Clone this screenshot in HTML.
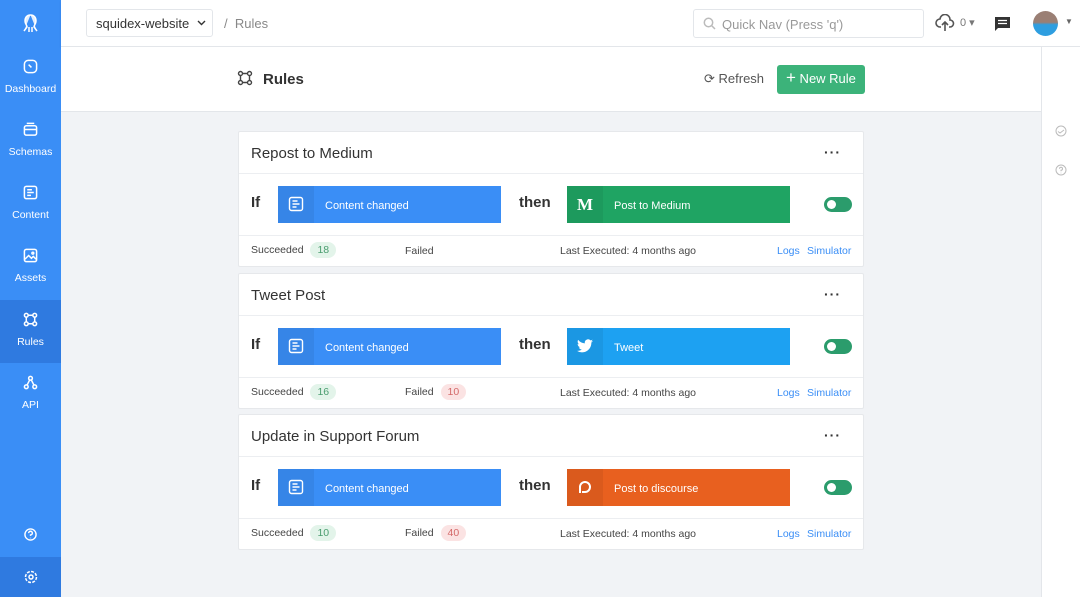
<!DOCTYPE html>
<html><head><meta charset="utf-8"><style>
*{box-sizing:border-box;margin:0;padding:0}
body{width:1080px;height:597px;overflow:hidden;font-family:"Liberation Sans",sans-serif;background:#f1f3f6;position:relative;color:#333}
.side{position:absolute;left:0;top:0;width:61px;height:597px;background:#3a8ef6}
.nav{position:absolute;left:0;width:61px;height:63px;color:#fff;font-size:10.5px;text-align:center}
.nav svg{display:block;margin:12px auto 9px}
.act{background:#2f7ae0}
.top{position:absolute;left:61px;top:0;right:0;height:47px;background:#fff;border-bottom:1px solid #e3e6ea;box-shadow:0 1px 3px rgba(0,0,0,.06)}
.hdr{position:absolute;left:61px;top:47px;width:980px;height:65px;background:#fff;border-bottom:1px solid #e3e6ea}
.rp{position:absolute;left:1041px;top:47px;width:39px;height:550px;background:#fff;border-left:1px solid #e3e6ea}
.card{position:absolute;left:238px;width:626px;height:136px;background:#fff;border:1px solid #e6e8eb;border-radius:2px}
.ch{height:42px;border-bottom:1px solid #eceef1;padding:13px 12px;font-size:15px;color:#333}
.dots{position:absolute;right:22px;top:12px;font-size:14px;font-weight:bold;letter-spacing:1px}
.cb{height:62px;border-bottom:1px solid #eceef1;position:relative}
.if{position:absolute;left:12px;top:20px;font-size:15px;font-weight:bold}
.then{position:absolute;left:280px;top:20px;font-size:15px;font-weight:bold}
.blk{position:absolute;top:12px;width:223px;height:37px;color:#fff;font-size:11px}
.blk .ic{position:absolute;left:0;top:0;width:36px;height:37px;background:rgba(0,0,0,.06)}
.blk span{position:absolute;left:47px;top:14px}
.tg{position:absolute;left:585px;top:23px;width:28px;height:15px;border-radius:8px;background:#2b9c6c}
.tg:after{content:"";position:absolute;left:3px;top:3px;width:9px;height:9px;border-radius:50%;background:#fff}
.cf{position:relative;height:31px;font-size:10.5px;color:#444}
.cf div{position:absolute;top:9px}
.bd{display:inline-block;padding:2px 7px;border-radius:9px;margin-left:4px}
.g{background:#e3f4ea;color:#4a9d6f}.r{background:#fbe3e3;color:#d46a6a}
.lk{color:#3a8ef6}
</style></head><body>
<div class="side">
 <svg style="position:absolute;left:22px;top:14px" width="17" height="20" viewBox="0 0 17 20"><path d="M8.5 1C4.5 1 3 4 3 7c0 3 2 4 2 6l-3 4M8.5 1c4 0 5.5 3 5.5 6 0 3-2 4-2 6l3 4M7 13v5M10 13v5" fill="#fff" fill-opacity=".85" stroke="#fff" stroke-width="1.5"/></svg>
 <div class="nav" style="top:47px"><svg width="15" height="15" viewBox="0 0 16 16" fill="none" stroke="#fff" stroke-width="1.6"><rect x="1.5" y="1.5" width="13" height="13" rx="4"/><path d="M6 6l3 3"/></svg>Dashboard</div>
 <div class="nav" style="top:110px"><svg width="15" height="15" viewBox="0 0 16 16" fill="none" stroke="#fff" stroke-width="1.6"><rect x="1.5" y="4" width="13" height="10" rx="2"/><path d="M4 1.5h8M1.5 8h13"/></svg>Schemas</div>
 <div class="nav" style="top:173px"><svg width="15" height="15" viewBox="0 0 16 16" fill="none" stroke="#fff" stroke-width="1.6"><rect x="1.5" y="1.5" width="13" height="13" rx="2"/><path d="M4.5 5h5M4.5 8h7M4.5 11h4"/></svg>Content</div>
 <div class="nav" style="top:236px"><svg width="15" height="15" viewBox="0 0 16 16" fill="none" stroke="#fff" stroke-width="1.6"><rect x="1.5" y="1.5" width="13" height="13" rx="2"/><path d="M2 12l4-4 3 3 2-2 3 3"/><circle cx="10.5" cy="5.5" r="1"/></svg>Assets</div>
 <div class="nav act" style="top:300px"><svg width="15" height="15" viewBox="0 0 16 16" fill="none" stroke="#fff" stroke-width="1.6"><circle cx="3.5" cy="3.5" r="2"/><circle cx="12.5" cy="3.5" r="2"/><circle cx="3.5" cy="12.5" r="2"/><circle cx="12.5" cy="12.5" r="2"/><path d="M5.5 3.5h5M5.5 12.5h5M3.5 5.5v5M12.5 5.5v5"/></svg>Rules</div>
 <div class="nav" style="top:363px"><svg width="15" height="15" viewBox="0 0 16 16" fill="none" stroke="#fff" stroke-width="1.6"><circle cx="8" cy="3.5" r="2"/><circle cx="3.5" cy="12.5" r="2"/><circle cx="12.5" cy="12.5" r="2"/><path d="M7 5.5l-2.5 5M9 5.5l2.5 5"/></svg>API</div>
 <svg style="position:absolute;left:24px;top:528px" width="13" height="13" viewBox="0 0 14 14" fill="none" stroke="#fff" stroke-width="1.5"><circle cx="7" cy="7" r="6"/><path d="M5 5.5a2 2 0 1 1 2 2v1M7 10.5v.5"/></svg>
 <div style="position:absolute;top:557px;left:0;width:61px;height:40px;background:#2f7ae0"><svg style="position:absolute;left:24px;top:13px" width="14" height="14" viewBox="0 0 14 14" fill="none" stroke="#fff" stroke-width="1.5"><circle cx="7" cy="7" r="2"/><circle cx="7" cy="7" r="5.5" stroke-dasharray="3 1.3"/></svg></div>
</div>
<div class="top">
 <div style="position:absolute;left:25px;top:9px;width:127px;height:28px;border:1px solid #e3e6ea;border-radius:3px;font-size:13px;padding:6px 9px;color:#333;white-space:nowrap">squidex-website <svg style="margin-left:4px;vertical-align:2px" width="9" height="6" viewBox="0 0 9 6" fill="none" stroke="#333" stroke-width="1.4"><path d="M1 1l3.5 3.5L8 1"/></svg></div>
 <div style="position:absolute;left:163px;top:16px;font-size:13px;color:#888">/&nbsp; Rules</div>
 <div style="position:absolute;left:632px;top:9px;width:231px;height:29px;border:1px solid #e3e6ea;border-radius:3px;font-size:13px;color:#999;padding:7px 28px"><svg style="position:absolute;left:9px;top:7px" width="13" height="13" viewBox="0 0 13 13" fill="none" stroke="#bbb" stroke-width="1.5"><circle cx="5.5" cy="5.5" r="4.2"/><path d="M8.5 8.5l3.5 3.5"/></svg>Quick Nav (Press 'q')</div>
 <svg style="position:absolute;left:874px;top:14px" width="20" height="18" viewBox="0 0 20 18" fill="none" stroke="#555" stroke-width="1.6"><path d="M6 13H5a4 4 0 0 1 0-8 5 5 0 0 1 10 1 3.5 3.5 0 0 1 0 7h-1M10 17V8M7 11l3-3 3 3"/></svg>
 <div style="position:absolute;left:899px;top:16px;font-size:11px;color:#777">0 &#9662;</div>
 <svg style="position:absolute;left:933px;top:16px" width="17" height="16" viewBox="0 0 17 16"><path d="M1 1h15v11H4l-3 3z" fill="#333"/><path d="M4 4.5h9M4 7.5h9" stroke="#fff" stroke-width="1.3"/></svg>
 <div style="position:absolute;left:972px;top:11px;width:25px;height:25px;border-radius:50%;background:linear-gradient(#9a7f74 45%,#2e9ee0 55%)"></div>
 <div style="position:absolute;left:1004px;top:17px;font-size:8px;color:#666">&#9660;</div>
</div>
<div class="hdr">
 <svg style="position:absolute;left:176px;top:23px" width="16" height="16" viewBox="0 0 16 16" fill="none" stroke="#444" stroke-width="1.4"><circle cx="3.5" cy="3.5" r="2"/><circle cx="12.5" cy="3.5" r="2"/><circle cx="3.5" cy="12.5" r="2"/><circle cx="12.5" cy="12.5" r="2"/><path d="M5.5 3.5h5M5.5 12.5h5M3.5 5.5v5M12.5 5.5v5"/></svg>
 <div style="position:absolute;left:202px;top:24px;font-size:15px;font-weight:bold;color:#333">Rules</div>
 <div style="position:absolute;left:643px;top:24px;font-size:13px;color:#555">&#10227; Refresh</div>
 <div style="position:absolute;left:716px;top:18px;width:88px;height:29px;background:#3cb37a;border-radius:3px;color:#fff;font-size:13px;padding:6px 9px"><b style="font-size:17px;font-weight:normal;line-height:14px">+</b> New Rule</div>
</div>
<div class="rp">
 <svg style="position:absolute;left:13px;top:78px" width="12" height="12" viewBox="0 0 12 12" fill="none" stroke="#bbb"><circle cx="6" cy="6" r="5"/><path d="M3 6.5l2 1.5 4-3"/></svg>
 <svg style="position:absolute;left:13px;top:117px" width="12" height="12" viewBox="0 0 12 12" fill="none" stroke="#bbb"><circle cx="6" cy="6" r="5"/><path d="M4.5 4.8a1.5 1.5 0 1 1 1.5 1.5v1M6 8.8v.4"/></svg>
</div>

<div class="card" style="top:131px">
 <div class="ch">Repost to Medium</div><div class="dots">···</div>
 <div class="cb"><div class="if">If</div>
  <div class="blk" style="left:39px;background:#3a8ef6"><div class="ic"><svg style="margin:10px" width="16" height="16" viewBox="0 0 16 16" fill="none" stroke="#fff" stroke-width="1.4"><rect x="1.5" y="1.5" width="13" height="13" rx="2"/><path d="M4.5 5h5M4.5 8h7M4.5 11h4"/></svg></div><span>Content changed</span></div>
  <div class="then">then</div>
  <div class="blk" style="left:328px;background:#1fa463"><div class="ic" style="font:bold 17px 'Liberation Serif',serif;padding:9px 10px">M</div><span>Post to Medium</span></div>
  <div class="tg"></div></div>
 <div class="cf"><div style="left:12px;top:6px">Succeeded <span class="bd g">18</span></div><div style="left:166px">Failed</div><div style="left:321px">Last Executed: 4 months ago</div><div style="left:538px" class="lk">Logs</div><div style="left:568px" class="lk">Simulator</div></div>
</div>

<div class="card" style="top:273px">
 <div class="ch">Tweet Post</div><div class="dots">···</div>
 <div class="cb"><div class="if">If</div>
  <div class="blk" style="left:39px;background:#3a8ef6"><div class="ic"><svg style="margin:10px" width="16" height="16" viewBox="0 0 16 16" fill="none" stroke="#fff" stroke-width="1.4"><rect x="1.5" y="1.5" width="13" height="13" rx="2"/><path d="M4.5 5h5M4.5 8h7M4.5 11h4"/></svg></div><span>Content changed</span></div>
  <div class="then">then</div>
  <div class="blk" style="left:328px;background:#1da1f2"><div class="ic"><svg style="margin:11px 10px" width="16" height="14" viewBox="0 0 24 20"><path fill="#fff" d="M24 2.4a10 10 0 0 1-2.8.8A5 5 0 0 0 23.3.4a10 10 0 0 1-3.1 1.2A4.9 4.9 0 0 0 11.8 6 14 14 0 0 1 1.7.9a4.9 4.9 0 0 0 1.5 6.6 5 5 0 0 1-2.2-.6 4.9 4.9 0 0 0 3.900 4.9 5 5 0 0 1-2.2.1 4.9 4.9 0 0 0 4.6 3.4A9.9 9.9 0 0 1 0 17.3 14 14 0 0 0 7.5 19.5c9.1 0 14-7.5 14-14v-.6A10 10 0 0 0 24 2.4z"/></svg></div><span>Tweet</span></div>
  <div class="tg"></div></div>
 <div class="cf"><div style="left:12px;top:6px">Succeeded <span class="bd g">16</span></div><div style="left:166px;top:6px">Failed <span class="bd r">10</span></div><div style="left:321px">Last Executed: 4 months ago</div><div style="left:538px" class="lk">Logs</div><div style="left:568px" class="lk">Simulator</div></div>
</div>

<div class="card" style="top:414px">
 <div class="ch">Update in Support Forum</div><div class="dots">···</div>
 <div class="cb"><div class="if">If</div>
  <div class="blk" style="left:39px;background:#3a8ef6"><div class="ic"><svg style="margin:10px" width="16" height="16" viewBox="0 0 16 16" fill="none" stroke="#fff" stroke-width="1.4"><rect x="1.5" y="1.5" width="13" height="13" rx="2"/><path d="M4.5 5h5M4.5 8h7M4.5 11h4"/></svg></div><span>Content changed</span></div>
  <div class="then">then</div>
  <div class="blk" style="left:328px;background:#e8601f"><div class="ic"><svg style="margin:10px" width="16" height="16" viewBox="0 0 16 16" fill="none" stroke="#fff" stroke-width="2"><path d="M3 14V8a5 5 0 1 1 5 5H5"/></svg></div><span>Post to discourse</span></div>
  <div class="tg"></div></div>
 <div class="cf"><div style="left:12px;top:6px">Succeeded <span class="bd g">10</span></div><div style="left:166px;top:6px">Failed <span class="bd r">40</span></div><div style="left:321px">Last Executed: 4 months ago</div><div style="left:538px" class="lk">Logs</div><div style="left:568px" class="lk">Simulator</div></div>
</div>
</body></html>
